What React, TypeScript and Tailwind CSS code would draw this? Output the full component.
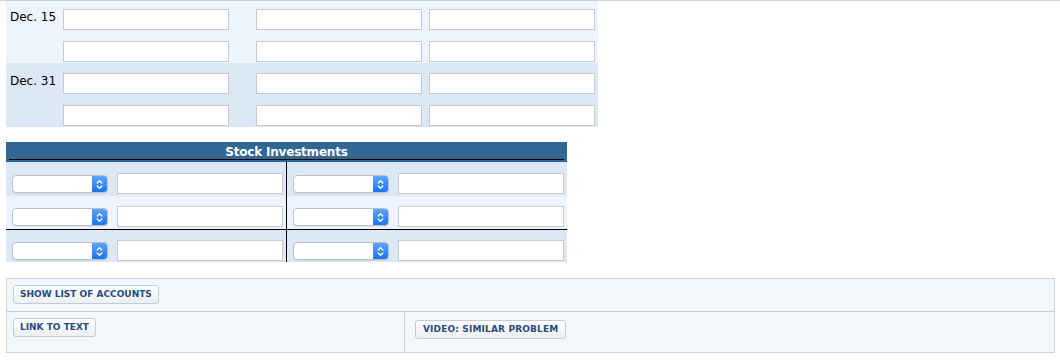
import React from "react"

// ─── Shared bits ──────────────────────────────────────────────────────────────

const font = { fontFamily: '"DejaVu Sans", Verdana, sans-serif' }

function TextBox() {
  return <div className="h-[21px] w-[166px] shrink-0 border border-[#c9c9c9] bg-white" />
}

function SelectBox() {
  return (
    <div className="flex h-[18px] w-[96px] shrink-0 overflow-hidden rounded-[4px] border border-[#bcc1c8] bg-white shadow-[0_1px_0_rgba(0,0,0,0.06)]">
      <div className="flex-1" />
      <div className="flex w-[15px] flex-col items-center justify-center bg-gradient-to-b from-[#5aa5ff] to-[#1a73f0]">
        <svg width="7" height="11" viewBox="0 0 7 11" fill="none" stroke="white" strokeWidth="1.3" strokeLinecap="round" strokeLinejoin="round">
          <path d="M1.2 4 L3.5 1.7 L5.8 4" />
          <path d="M1.2 7 L3.5 9.3 L5.8 7" />
        </svg>
      </div>
    </div>
  )
}

function Button({ label, wide }: { label: string; wide?: boolean }) {
  return (
    <div
      className={
        "flex h-[19px] items-center rounded-[3px] border border-[#c3cbd6] bg-gradient-to-b from-white to-[#eceff3] text-[9px] font-bold leading-none text-[#2a4b7c] " +
        (wide ? "px-[7px] tracking-[0.15px]" : "px-[6px]")
      }
    >
      {label}
    </div>
  )
}

// ─── Journal rows ─────────────────────────────────────────────────────────────

function EntryGroup({ date, tall, bg }: { date: string; tall: boolean; bg: string }) {
  return (
    <div className={(tall ? "h-[64px] pt-[10px] " : "h-[62px] pt-[8px] ") + bg + " flex flex-col gap-[11px]"}>
      {[0, 1].map((i) => (
        <div key={i} className="flex items-start">
          <div className="w-[57px] shrink-0 pl-[4px] pt-[1px] text-[12px] leading-[14px] text-black">
            {i === 0 ? date : ""}
          </div>
          <TextBox />
          <div className="w-[27px] shrink-0" />
          <TextBox />
          <div className="w-[7px] shrink-0" />
          <TextBox />
        </div>
      ))}
    </div>
  )
}

// ─── T-account ────────────────────────────────────────────────────────────────

function TRow({ h, pt, bg }: { h: string; pt: string; bg: string }) {
  return (
    <div className={"flex " + h + " " + bg}>
      {[0, 1].map((side) => (
        <div
          key={side}
          className={
            "flex items-start gap-[9px] pl-[6px] " +
            pt +
            (side === 0 ? " w-[281px] border-r border-black" : " w-[280px]")
          }
        >
          <div className="pt-[2px]">
            <SelectBox />
          </div>
          <TextBox />
        </div>
      ))}
    </div>
  )
}

export default function App() {
  return (
    <div className="min-h-[360px] w-[1060px] bg-white" style={font}>
      <div className="border-t border-[#c9d0db]">
        <div className="ml-[6px] w-[592px]">
          <EntryGroup date="Dec. 15" tall={false} bg="bg-[#edf4fe]" />
          <EntryGroup date="Dec. 31" tall bg="bg-[#dce8f6]" />
        </div>
      </div>

      <div className="ml-[6px] mt-[15px] w-[561px]">
        <div className="h-[20px] bg-[#306893] px-[3px]">
          <div className="flex h-[18px] items-center justify-center border-b border-black pt-[2px] text-[12px] font-bold leading-none tracking-[-0.2px] text-white">
            Stock Investments
          </div>
        </div>
        <TRow h="h-[34px]" pt="pt-[11px]" bg="bg-[#dce8f6]" />
        <TRow h="h-[33px]" pt="pt-[10px]" bg="bg-[#edf4fe]" />
        <div className="h-px bg-black" />
        <TRow h="h-[32px]" pt="pt-[10px]" bg="bg-[#dce8f6]" />
      </div>

      <div className="ml-[6px] mt-[16px] w-[1049px] border border-[#c8d1dd] bg-[#f4f7fa]">
        <div className="flex h-[33px] items-start border-b border-[#c8d1dd] pl-[6px] pt-[6px]">
          <Button label="SHOW LIST OF ACCOUNTS" />
        </div>
        <div className="flex h-[40px]">
          <div className="flex w-[398px] items-start border-r border-[#c8d1dd] pl-[6px] pt-[6px]">
            <Button label="LINK TO TEXT" />
          </div>
          <div className="flex items-start pl-[10px] pt-[8px]">
            <Button label="VIDEO: SIMILAR PROBLEM" wide />
          </div>
        </div>
      </div>
    </div>
  )
}
